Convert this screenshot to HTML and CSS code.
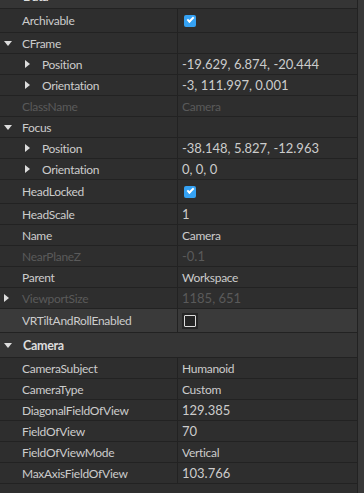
FILE: index.html
```html
<!DOCTYPE html>
<html lang="en">
<head>
  <meta charset="UTF-8" />
  <title>Properties - Camera</title>
  <link rel="stylesheet" href="styles.css">
</head>
<body>
  <div class="panel">
    <div class="list">
      <div class="section"><span class="arrow down"></span>Data</div>

      <div class="row tall">
        <div class="name">Archivable</div>
        <div class="value"><span class="check on"></span></div>
      </div>
      <div class="row">
        <div class="name"><span class="arrow down"></span>CFrame</div>
        <div class="value"></div>
      </div>
      <div class="row">
        <div class="name sub"><span class="arrow right"></span>Position</div>
        <div class="value num">-19.629, 6.874, -20.444</div>
      </div>
      <div class="row">
        <div class="name sub"><span class="arrow right"></span>Orientation</div>
        <div class="value num">-3, 111.997, 0.001</div>
      </div>
      <div class="row off">
        <div class="name">ClassName</div>
        <div class="value">Camera</div>
      </div>
      <div class="row">
        <div class="name"><span class="arrow down"></span>Focus</div>
        <div class="value"></div>
      </div>
      <div class="row">
        <div class="name sub"><span class="arrow right"></span>Position</div>
        <div class="value num">-38.148, 5.827, -12.963</div>
      </div>
      <div class="row">
        <div class="name sub"><span class="arrow right"></span>Orientation</div>
        <div class="value num">0, 0, 0</div>
      </div>
      <div class="row tall">
        <div class="name">HeadLocked</div>
        <div class="value"><span class="check on"></span></div>
      </div>
      <div class="row">
        <div class="name">HeadScale</div>
        <div class="value num">1</div>
      </div>
      <div class="row">
        <div class="name">Name</div>
        <div class="value">Camera</div>
      </div>
      <div class="row off">
        <div class="name">NearPlaneZ</div>
        <div class="value num">-0.1</div>
      </div>
      <div class="row">
        <div class="name">Parent</div>
        <div class="value">Workspace</div>
      </div>
      <div class="row off">
        <div class="name"><span class="arrow right"></span>ViewportSize</div>
        <div class="value num">1185, 651</div>
      </div>
      <div class="row tall hover">
        <div class="name">VRTiltAndRollEnabled</div>
        <div class="value"><span class="check"></span></div>
      </div>

      <div class="section"><span class="arrow down"></span>Camera</div>

      <div class="row">
        <div class="name">CameraSubject</div>
        <div class="value">Humanoid</div>
      </div>
      <div class="row">
        <div class="name">CameraType</div>
        <div class="value">Custom</div>
      </div>
      <div class="row">
        <div class="name">DiagonalFieldOfView</div>
        <div class="value num">129.385</div>
      </div>
      <div class="row">
        <div class="name">FieldOfView</div>
        <div class="value num">70</div>
      </div>
      <div class="row">
        <div class="name">FieldOfViewMode</div>
        <div class="value">Vertical</div>
      </div>
      <div class="row">
        <div class="name">MaxAxisFieldOfView</div>
        <div class="value num">103.766</div>
      </div>
    </div>
    <div class="scrollbar"></div>
  </div>
</body>
</html>
```

FILE: styles.css
```css
body {
  margin: 0;
  overflow: hidden;
  background: #2e2e2e;
  font-family: Lato, "Liberation Sans", sans-serif;
  font-size: 12px;
  letter-spacing: -0.3px;
  color: #cccccc;
}

.panel {
  display: flex;
  height: 493px;
}

.list {
  flex: 1;
  margin-top: -16px;
}

.scrollbar {
  width: 6px;
  background: #383838;
  border-left: 1px solid #222;
}

.section {
  display: flex;
  align-items: center;
  height: 24px;
  padding-left: 4px;
  background: #353535;
  color: #dddddd;
  font-size: 12.5px;
  font-weight: bold;
  border-bottom: 1px solid #222;
}

.section .arrow {
  margin-right: 11px;
}

.row {
  display: grid;
  grid-template-columns: 178px 1fr;
  height: 20px;
  border-bottom: 1px solid #222;
}

.row.tall {
  height: 23px;
}

.row.hover {
  background: #3a3a3a;
}

.name {
  display: flex;
  align-items: center;
  padding-left: 22px;
  border-right: 1px solid #222;
  white-space: nowrap;
  position: relative;
}

.name .arrow {
  position: absolute;
  left: 4px;
}

.name.sub {
  padding-left: 42px;
}

.name.sub .arrow {
  left: 25px;
}

.value {
  display: flex;
  align-items: center;
  padding-left: 4px;
  white-space: nowrap;
}

.value.num {
  font-size: 13px;
  letter-spacing: 0;
}

.off .name,
.off .value {
  color: #5a5a5a;
}

.arrow {
  display: inline-block;
  width: 0;
  height: 0;
}

.arrow.down {
  border-left: 4px solid transparent;
  border-right: 4px solid transparent;
  border-top: 5px solid #dddddd;
}

.arrow.right {
  border-top: 4px solid transparent;
  border-bottom: 4px solid transparent;
  border-left: 5px solid #dddddd;
}

.check {
  width: 16px;
  height: 16px;
  box-sizing: border-box;
  padding: 2px;
  background: #252525;
  position: relative;
}

.check::after {
  content: "";
  display: block;
  width: 12px;
  height: 12px;
  box-sizing: border-box;
  border: 1px solid #dddddd;
  border-radius: 1px;
}

.check.on {
  width: 12px;
  height: 12px;
  margin-left: 2px;
  padding: 0;
  background: #35a2f4;
  border-radius: 2px;
}

.check.on::after {
  position: absolute;
  left: 3px;
  top: 2px;
  width: 7px;
  height: 4px;
  border: 0;
  border-radius: 0;
  border-left: 2px solid #fff;
  border-bottom: 2px solid #fff;
  transform: rotate(-45deg);
}
```
